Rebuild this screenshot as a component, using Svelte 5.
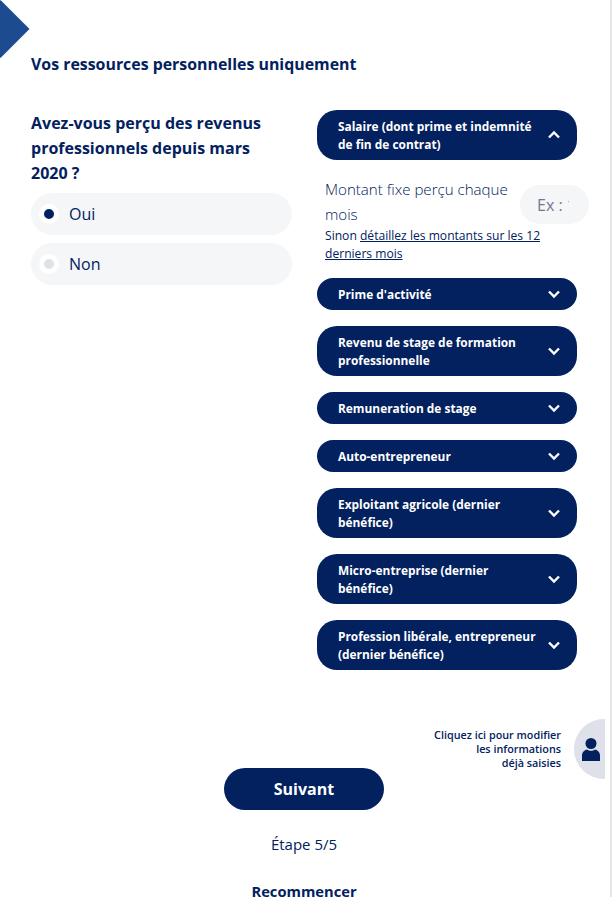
<script>
	const items = [
		{ label: "Prime d'activité" },
		{ label: 'Revenu de stage de formation professionnelle' },
		{ label: 'Remuneration de stage' },
		{ label: 'Auto-entrepreneur' },
		{ label: 'Exploitant agricole (dernier bénéfice)' },
		{ label: 'Micro-entreprise (dernier bénéfice)' },
		{ label: 'Profession libérale, entrepreneur (dernier bénéfice)' }
	];
</script>

<div class="page">
	<div class="corner"></div>

	<h2 class="title">Vos ressources personnelles uniquement</h2>

	<div class="columns">
		<section class="left">
			<h3 class="question">Avez-vous perçu des revenus professionnels depuis mars 2020 ?</h3>
			<div class="radio">
				<span class="dot on"></span>
				<span>Oui</span>
			</div>
			<div class="radio">
				<span class="dot"></span>
				<span>Non</span>
			</div>
		</section>

		<section class="right">
			<button class="acc">
				<span>Salaire (dont prime et indemnité de fin de contrat)</span>
				<svg viewBox="0 0 14 10" class="chev"><path d="M2 7.500 7 2.500l5 5" /></svg>
			</button>
			<div class="panel">
				<div class="amount">
					<div class="amount-label">Montant fixe perçu chaque mois</div>
					<input class="amount-input" placeholder="Ex : 1000" />
				</div>
				<p class="hint">Sinon <u>détaillez les montants sur les 12 derniers mois</u></p>
			</div>
			{#each items as item}
				<button class="acc">
					<span>{item.label}</span>
					<svg viewBox="0 0 14 10" class="chev"><path d="M2 2.500l5 5 5-5" /></svg>
				</button>
			{/each}
		</section>
	</div>

	<div class="edit">
		<p>Cliquez ici pour modifier<br />les informations<br />déjà saisies</p>
		<div class="edit-badge">
			<svg viewBox="0 0 18 23" class="person">
				<circle cx="9" cy="5.500" r="5.500" />
				<path d="M0 23v-5.500c0-3.500 2.500-5.500 5-6 2 1.800 6 1.800 8 0 2.500.5 5 2.500 5 6V23z" />
			</svg>
		</div>
	</div>

	<button class="next">Suivant</button>
	<div class="step">Étape 5/5</div>
	<div class="restart">Recommencer</div>
</div>

<style>
	:global(body) {
		margin: 0;
		background: #fff;
		overflow: hidden;
	}

	.page {
		position: relative;
		box-sizing: border-box;
		width: 612px;
		height: 897px;
		padding: 54px 0 0 31px;
		border-right: 2px solid #e6e6e6;
		overflow: hidden;
		font-family: 'Open Sans', sans-serif;
		color: #02215e;
	}

	.corner {
		position: absolute;
		left: -28.500px;
		top: 0;
		width: 58px;
		height: 58px;
		background: #1c4b8f;
		clip-path: polygon(50% 0, 100% 50%, 50% 100%, 0 50%);
	}

	.title {
		margin: 0;
		font-size: 15.900px;
		line-height: 20px;
		font-weight: 700;
	}

	.columns {
		display: flex;
		gap: 25px;
		margin-top: 37px;
	}

	.left {
		width: 261px;
		flex: none;
	}

	.question {
		margin: 0 0 7px;
		max-width: 245px;
		font-size: 16px;
		line-height: 25px;
		font-weight: 700;
	}

	.radio {
		display: flex;
		align-items: center;
		gap: 10px;
		height: 42px;
		margin-bottom: 8px;
		padding-left: 8px;
		border-radius: 21px;
		background: #f5f6f8;
		font-size: 16px;
	}

	.dot {
		box-sizing: border-box;
		width: 20px;
		height: 20px;
		border: 5px solid #fff;
		border-radius: 50%;
		background: #dfe3e8;
	}

	.dot.on {
		background: #02215e;
	}

	.right {
		width: 260px;
		flex: none;
		margin-top: -1px;
		display: flex;
		flex-direction: column;
		gap: 16.500px;
	}

	.acc {
		display: flex;
		align-items: center;
		justify-content: space-between;
		box-sizing: border-box;
		width: 100%;
		padding: 6.750px 16px 6.750px 21px;
		border: 0;
		border-radius: 20px;
		background: #02215e;
		color: #fff;
		font: 700 11.900px/18px 'Open Sans', sans-serif;
		text-align: left;
	}

	.acc span {
		max-width: 200px;
	}

	.chev {
		flex: none;
		width: 14px;
		height: 10px;
		fill: none;
		stroke: #fff;
		stroke-width: 2.400;
	}

	.panel {
		margin-top: 0.500px;
		padding-left: 8px;
	}

	.amount {
		display: flex;
		align-items: center;
		justify-content: space-between;
		width: 264px;
	}

	.amount-label {
		width: 190px;
		font-size: 15.100px;
		font-weight: 300;
		line-height: 25px;
	}

	.amount-input {
		box-sizing: border-box;
		width: 69px;
		height: 39px;
		margin: 6px 0 0;
		padding: 0 20px 0 17px;
		border: 0;
		border-radius: 20px;
		background: #f5f6f8;
		font: 16px 'Open Sans', sans-serif;
	}

	.amount-input::placeholder {
		color: #6f7a90;
		opacity: 1;
	}

	.hint {
		margin: 0 0 -1px;
		font-size: 12.100px;
		line-height: 18px;
	}

	.edit {
		position: absolute;
		right: 5px;
		top: 719px;
		display: flex;
		align-items: center;
		gap: 13px;
	}

	.edit p {
		margin: 0;
		text-align: right;
		font-size: 10.800px;
		line-height: 14px;
		font-weight: 600;
	}

	.edit-badge {
		display: flex;
		align-items: center;
		justify-content: flex-end;
		box-sizing: border-box;
		width: 31px;
		height: 60px;
		padding-right: 5px;
		border-radius: 30px 0 0 30px;
		background: #dfe1ea;
	}

	.person {
		width: 18px;
		height: 23px;
		fill: #02215e;
	}

	.next {
		display: block;
		width: 160px;
		height: 42px;
		margin: 98px 0 0 193px;
		border: 0;
		border-radius: 21px;
		background: #02215e;
		color: #fff;
		font: 700 16px 'Open Sans', sans-serif;
	}

	.step {
		width: 160px;
		margin: 24px 0 0 193px;
		text-align: center;
		font-size: 15px;
		line-height: 20px;
	}

	.restart {
		width: 160px;
		margin: 27px 0 0 193px;
		text-align: center;
		font-size: 14.700px;
		line-height: 20px;
		font-weight: 700;
	}
</style>
